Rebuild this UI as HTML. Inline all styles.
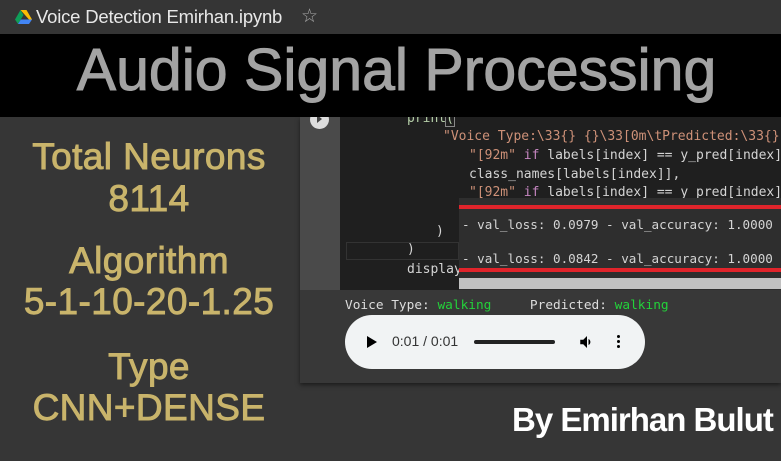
<!DOCTYPE html>
<html><head><meta charset="utf-8"><style>
*{margin:0;padding:0;box-sizing:border-box}
body{width:781px;height:461px;overflow:hidden;background:#363636;position:relative;font-family:"Liberation Sans",sans-serif}
.abs{position:absolute}
.tab{left:0;top:0;width:781px;height:34px;background:#353535}
.banner{left:0;top:34px;width:781px;height:83px;background:#000}
.gold{position:absolute;left:0;width:298px;text-align:center;color:#c9b46b;font-size:37px;-webkit-text-stroke:0.9px #c9b46b;letter-spacing:0.4px;line-height:40px;white-space:nowrap}
.mono{font-family:"DejaVu Sans Mono","Liberation Mono",monospace;font-size:13px;white-space:pre;position:absolute}
.c{color:#d4d4d4}.s{color:#ce9178}.k{color:#c586c0}
</style></head><body>
<div class="abs tab"></div>
<svg class="abs" style="left:15px;top:10px" width="17" height="14" viewBox="0 0 17 14"><polygon points="5.5,0 11.5,0 17,9.5 14,9.5" fill="#fbbc04"/><polygon points="5.5,0 8.5,5 3,14 0,9.5" fill="#0f9d58"/><polygon points="3,14 14,14 17,9.5 5.8,9.5" fill="#4285f4"/></svg>
<div class="abs" style="left:36px;top:6px;color:#e8e8e8;font-size:18.5px;letter-spacing:-0.2px">Voice Detection Emirhan.ipynb</div>
<div class="abs" style="left:301px;top:5px;color:#aaa;font-size:19px">☆</div>

<div class="abs" style="left:300px;top:117px;width:481px;height:266px;background:#383838;box-shadow:0 2px 4px rgba(0,0,0,.5)"></div>
<div class="abs" style="left:300px;top:117px;width:40px;height:173px;background:#4a4a4a"></div>
<div class="abs" style="left:340px;top:117px;width:441px;height:173px;background:#1f1f1f;overflow:hidden">
 <div class="mono c" style="left:67px;top:-6px;color:#b5cea8">print<span style="outline:1px solid #888">(</span></div>
 <div class="mono s" style="left:103px;top:12px">"Voice Type:\33{} {}\33[0m\tPredicted:\33{} {}</div>
 <div class="mono" style="left:129px;top:31px"><span class="s">"[92m"</span> <span class="k">if</span><span class="c"> labels[index] == y_pred[index]</span></div>
 <div class="mono c" style="left:129px;top:50px">class_names[labels[index]],</div>
 <div class="mono" style="left:129px;top:68px"><span class="s">"[92m"</span> <span class="k">if</span><span class="c"> labels[index] == y_pred[index]</span></div>
 <div class="mono c" style="left:96px;top:107px">)</div>
 <div class="abs" style="left:6px;top:125px;width:113px;height:18px;border:1px solid #333"></div>
 <div class="mono c" style="left:67px;top:125px">)</div>
 <div class="mono c" style="left:67px;top:145px">display</div>
</div>
<div class="abs" style="left:310px;top:110px;width:19px;height:19px;border-radius:50%;background:#ddd"></div>
<div class="abs" style="left:317px;top:115px;width:0;height:0;border-left:5px solid #444;border-top:4px solid transparent;border-bottom:4px solid transparent"></div>

<div class="abs banner"></div>
<div class="abs" style="left:0;top:35px;width:781px;text-align:center;color:#a3a3a3;font-size:59px;-webkit-text-stroke:1px #a3a3a3;line-height:70px;padding-left:12px;white-space:nowrap">Audio Signal Processing</div>

<div class="gold" style="top:137px">Total Neurons</div>
<div class="gold" style="top:179px">8114</div>
<div class="gold" style="top:241px">Algorithm</div>
<div class="gold" style="top:282px">5-1-10-20-1.25</div>
<div class="gold" style="top:347px">Type</div>
<div class="gold" style="top:388px">CNN+DENSE</div>

<div class="abs" style="left:459px;top:198px;width:322px;height:92px;background:#2e2e2e;overflow:hidden">
 <div class="abs" style="left:0;top:7px;width:322px;height:4px;background:#e0242b"></div>
 <div class="mono c" style="left:3px;top:19px;font-size:12.6px">- val_loss: 0.0979 - val_accuracy: 1.0000</div>
 <div class="mono c" style="left:3px;top:53px;font-size:12.6px">- val_loss: 0.0842 - val_accuracy: 1.0000</div>
 <div class="abs" style="left:0;top:70px;width:322px;height:4px;background:#e0242b"></div>
 <div class="abs" style="left:0;top:80px;width:322px;height:11px;background:#c1c1c1"></div>
</div>

<div class="mono" style="left:345px;top:298px;color:#ddd;font-size:12.8px">Voice Type: <span style="color:#23d23a">walking</span>     Predicted: <span style="color:#23d23a">walking</span></div>
<div class="abs" style="left:345px;top:315px;width:300px;height:54px;border-radius:27px;background:#f1f3f4"></div>
<div class="abs" style="left:367px;top:336px;width:0;height:0;border-left:10px solid #000;border-top:6px solid transparent;border-bottom:6px solid transparent"></div>
<div class="abs" style="left:392px;top:333px;font-size:14px;color:#333">0:01 / 0:01</div>
<div class="abs" style="left:474px;top:340px;width:81px;height:4px;border-radius:2px;background:#222"></div>
<svg class="abs" style="left:578px;top:333px" width="18" height="18" viewBox="0 0 24 24"><path d="M3 9v6h4l5 5V4L7 9H3zm13.5 3A4.5 4.5 0 0 0 14 7.97v8.05A4.48 4.48 0 0 0 16.5 12z" fill="#000"/></svg>
<div class="abs" style="left:617px;top:335px;width:3px;height:3px;border-radius:50%;background:#000;box-shadow:0 5px 0 #000,0 10px 0 #000"></div>

<div class="abs" style="left:512px;top:401px;color:#fff;font-size:33px;font-weight:bold;letter-spacing:-1px;white-space:nowrap">By Emirhan Bulut</div>
</body></html>
